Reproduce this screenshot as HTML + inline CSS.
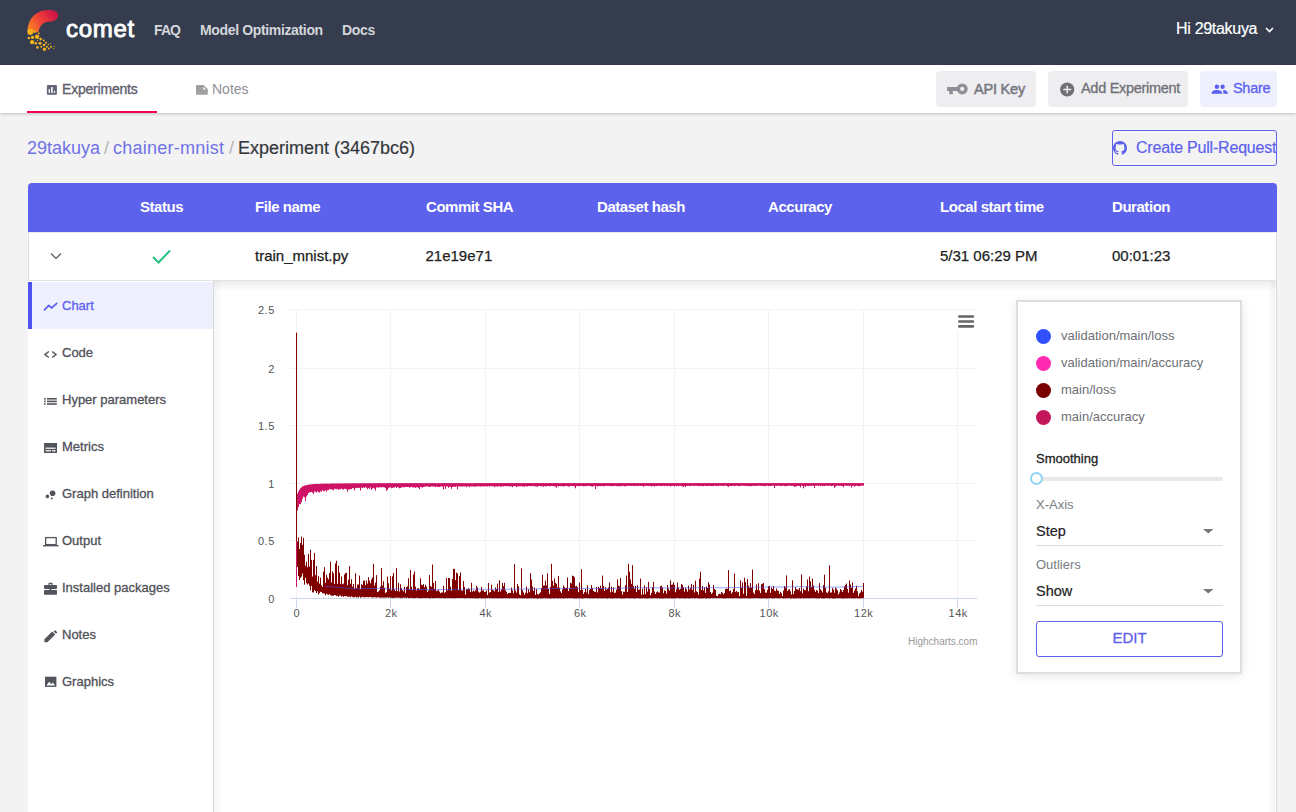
<!DOCTYPE html>
<html><head><meta charset="utf-8">
<style>
*{box-sizing:border-box;margin:0;padding:0}
html,body{width:1296px;height:812px;overflow:hidden;background:#f3f3f3;font-family:"Liberation Sans",sans-serif;}
.abs{position:absolute;white-space:nowrap}
#hdr{position:absolute;left:0;top:0;width:1296px;height:65px;background:#343c4e}
#tabs{position:absolute;left:0;top:65px;width:1296px;height:48px;background:#fff;box-shadow:0 1px 3px rgba(0,0,0,.22)}
.nav{position:absolute;top:22px;font-size:14px;line-height:16px;font-weight:bold;color:#d5d6db;white-space:nowrap;letter-spacing:-0.35px}
.btn{position:absolute;top:6px;height:36px;border-radius:4px;background:#eeeef1;color:#6f7076;font-size:14.5px;white-space:nowrap}
.btn span{position:absolute;top:9px;line-height:17px}
.crumb{position:absolute;top:138px;font-size:18px;line-height:21px;white-space:nowrap}
#tbl{position:absolute;left:28px;top:183px;width:1249px;height:98px;border-radius:4px 4px 0 0;overflow:hidden;}
#thead{position:absolute;left:0;top:0;width:1249px;height:49px;background:#5c62ec}
#trow{position:absolute;left:0;top:49px;width:1249px;height:49px;background:#fff;border:1px solid #e0e0e0;border-top:1px solid #ebebe8;border-bottom:1px solid #e3e3e3}
.th{position:absolute;top:14.5px;font-size:15px;line-height:17px;font-weight:bold;color:#fff;white-space:nowrap;letter-spacing:-0.45px}
.td{position:absolute;top:14px;font-size:15px;line-height:17px;color:#222;white-space:nowrap;-webkit-text-stroke:0.25px #222}
#side{position:absolute;left:28px;top:281px;width:186px;height:531px;background:#fff;border-right:1px solid #dadada;z-index:1}
.si{position:absolute;z-index:2;left:28px;width:185px;height:47px;font-size:13px;color:#4f5158;-webkit-text-stroke:0.3px #4f5158}
.si span{position:absolute;left:34px;top:16px;line-height:15px;white-space:nowrap}
#main{position:absolute;left:214px;top:281px;width:1062px;height:531px;background:#fff}
#rline{position:absolute;left:1276px;top:281px;width:1px;height:531px;background:#dadada}
.ylab{position:absolute;font-size:11px;line-height:12px;color:#555;text-align:right;width:40px;letter-spacing:0.5px}
.xlab{position:absolute;font-size:11px;line-height:12px;color:#555;text-align:center;width:40px;letter-spacing:0.5px}
#legend{position:absolute;left:1016px;top:300px;width:226px;height:374px;background:#fff;border:2px solid #dedede;box-shadow:0 2px 10px rgba(0,0,0,.1)}
.lg{position:absolute;left:18px;font-size:13px;line-height:15px;color:#6d6f75;white-space:nowrap}
.lg i{position:absolute;left:0;top:0;width:15px;height:15px;border-radius:50%}
.lg span{position:absolute;left:25px;top:-1px}
</style></head><body>
<div id="hdr">
  <svg class="abs" style="left:0;top:0" width="64" height="64" viewBox="0 0 64 64">
    <defs><linearGradient id="cg" x1="28" y1="32" x2="58" y2="12" gradientUnits="userSpaceOnUse">
      <stop offset="0" stop-color="#f7901e"/><stop offset="0.5" stop-color="#ef3b3a"/><stop offset="1" stop-color="#c30d4a"/></linearGradient></defs>
    <path d="M27.6 31.5 C27.6 19 36 10.2 47.5 9.9 C54 9.7 58.2 11.5 58.2 15 C58.2 18.8 54.5 21.6 50 21.6 C44 21.6 39.2 25.5 38.4 32.5 Z" fill="url(#cg)"/>
    <g fill="#f5b21e">
      <circle cx="30.3" cy="32" r="3"/><circle cx="34.7" cy="31.7" r="1.2"/><circle cx="38.9" cy="33.3" r="0.9"/>
      <circle cx="28.8" cy="38" r="1.2"/><circle cx="32.5" cy="37.4" r="1.7"/><circle cx="37.1" cy="36.8" r="2.2"/>
      <circle cx="40.6" cy="39.1" r="1.4"/><circle cx="32.1" cy="42.1" r="2.2"/><circle cx="35.9" cy="43.3" r="1.3"/>
      <circle cx="40" cy="43.3" r="1.5"/><circle cx="37.4" cy="40.6" r="0.6"/><circle cx="43.8" cy="40.6" r="1"/>
      <circle cx="46" cy="42.8" r="1"/><circle cx="44" cy="45" r="1.3"/><circle cx="48.3" cy="44.5" r="0.7"/>
      <circle cx="50.5" cy="43.4" r="0.5"/><circle cx="37.4" cy="47.4" r="1.3"/><circle cx="41.2" cy="46.8" r="1"/>
      <circle cx="46.9" cy="46.7" r="1"/><circle cx="51" cy="46.8" r="1"/><circle cx="44.5" cy="49.2" r="1.7"/>
      <circle cx="48.9" cy="48.5" r="0.9"/><circle cx="53.7" cy="48.3" r="0.6"/><circle cx="54.4" cy="46.4" r="0.5"/>
    </g>
  </svg>
  <div class="abs" style="left:66px;top:14.5px;font-size:24px;line-height:28px;color:#fff;letter-spacing:0.7px;-webkit-text-stroke:0.9px #fff">comet</div>
  <div class="nav" style="left:154px;letter-spacing:-0.9px">FAQ</div>
  <div class="nav" style="left:200px">Model Optimization</div>
  <div class="nav" style="left:342px">Docs</div>
  <div class="abs" style="left:1176px;top:19px;font-size:16px;line-height:19px;color:#fff;letter-spacing:-0.3px;-webkit-text-stroke:0.2px #fff">Hi 29takuya</div>
  <svg class="abs" style="left:1265px;top:27px" width="9" height="6" viewBox="0 0 9 6"><path d="M1 1 L4.5 4.5 L8 1" fill="none" stroke="#fff" stroke-width="1.6"/></svg>
</div>
<div id="tabs">
  <svg class="abs" style="left:0;top:0" width="60" height="48" viewBox="0 0 60 48"><rect x="46.9" y="20" width="10" height="9.8" rx="0.8" fill="#646578"/><rect x="48.6" y="24.2" width="1.4" height="3.6" fill="#fff"/><rect x="51.1" y="22.1" width="1.6" height="5.7" fill="#fff"/><rect x="53.8" y="26" width="1.3" height="1.8" fill="#fff"/></svg>
  <div class="abs" style="left:62px;top:16px;font-size:14px;line-height:16px;color:#5f6170;letter-spacing:-0.2px;-webkit-text-stroke:0.35px #5f6170">Experiments</div>
  <div class="abs" style="left:27px;top:46px;width:130px;height:2px;background:#f5004f"></div>
  <svg class="abs" style="left:0;top:0" width="220" height="48" viewBox="0 0 220 48"><path d="M196 21 Q196 20 197 20 H203.6 L207.8 24.3 V28.8 Q207.8 29.8 206.8 29.8 H197 Q196 29.8 196 28.8 Z" fill="#a0a0a0"/><path d="M203.2 21.8 L206 24.6 H203.2 Z" fill="#fff"/></svg>
  <div class="abs" style="left:212px;top:16px;font-size:14px;line-height:16px;color:#8f9096">Notes</div>

  <div class="btn" style="left:936px;width:100px">
    <svg class="abs" style="left:0;top:0" width="40" height="36" viewBox="0 0 40 36"><path d="M11.1 16 H22 V20 H16.8 V23.3 H13.3 V20 H11.1 Z" fill="#8e8e96"/><circle cx="26.2" cy="17.9" r="5.5" fill="#8e8e96"/><circle cx="26.2" cy="17.9" r="2.1" fill="#eeeef1"/></svg>
    <span style="left:38px;top:10px;color:#76777d;-webkit-text-stroke:0.5px #76777d;letter-spacing:-0.2px">API Key</span>
  </div>
  <div class="btn" style="left:1048px;width:140px">
    <svg class="abs" style="left:0;top:0" width="30" height="36" viewBox="0 0 30 36"><circle cx="19.2" cy="18.5" r="7.1" fill="#707075"/><path d="M15.3 18.5 H23.2 M19.2 14.7 V22.2" stroke="#eeeef1" stroke-width="1.5"/></svg>
    <span style="left:33px;top:9px;letter-spacing:-0.3px;-webkit-text-stroke:0.3px #6f7076">Add Experiment</span>
  </div>
  <div class="btn" style="left:1200px;width:77px;background:#eef0fd;color:#5d61ec">
    <svg class="abs" style="left:0;top:0" width="30" height="36" viewBox="0 0 30 36"><circle cx="16.9" cy="15.7" r="2.2" fill="#5b5ff0"/><circle cx="22.6" cy="15.7" r="2.2" fill="#5b5ff0"/><path d="M11.6 22.8 C11.6 20 14 19 16.9 19 C19.8 19 22.2 20 22.2 22.8 Z M23.3 19.1 C25.6 19.3 27.9 20.2 27.9 22.8 H23.3 Z" fill="#5b5ff0"/></svg>
    <span style="left:33px;top:9px;letter-spacing:-0.3px;-webkit-text-stroke:0.3px #5d61ec">Share</span>
  </div>
</div>

<div class="crumb" style="left:27px;color:#6f72e6">29takuya</div>
<div class="crumb" style="left:104px;color:#b5b5b5">/</div>
<div class="crumb" style="left:113px;color:#6f72e6;letter-spacing:0.25px">chainer-mnist</div>
<div class="crumb" style="left:229px;color:#b5b5b5">/</div>
<div class="crumb" style="left:238px;color:#35373c;-webkit-text-stroke:0.2px #35373c">Experiment (3467bc6)</div>

<div class="abs" style="left:1112px;top:130px;width:165px;height:36px;border:1px solid #5d61ec;border-radius:3px;background:#f3f3f3">
  <svg class="abs" style="left:0px;top:10px" width="14" height="14" viewBox="0 0 16 16"><path fill="#5d61ec" d="M8 0C3.58 0 0 3.58 0 8c0 3.54 2.29 6.53 5.47 7.59.4.07.55-.17.55-.38 0-.19-.01-.82-.01-1.49-2.01.37-2.53-.49-2.69-.94-.09-.23-.48-.94-.82-1.13-.28-.15-.68-.52-.01-.53.63-.01 1.08.58 1.23.82.72 1.21 1.87.87 2.33.66.07-.52.28-.87.51-1.07-1.78-.2-3.64-.89-3.64-3.95 0-.87.31-1.59.82-2.15-.08-.2-.36-1.02.08-2.12 0 0 .67-.21 2.2.82.64-.18 1.32-.27 2-.27.68 0 1.36.09 2 .27 1.53-1.04 2.2-.82 2.2-.82.44 1.1.16 1.92.08 2.12.51.56.82 1.28.82 2.15 0 3.07-1.87 3.75-3.65 3.95.29.25.54.73.54 1.48 0 1.07-.01 1.93-.01 2.2 0 .21.15.46.55.38A8.013 8.013 0 0016 8c0-4.42-3.58-8-8-8z"/></svg>
  <div class="abs" style="left:23px;top:7px;font-size:16px;line-height:19px;color:#5d61ec;letter-spacing:-0.2px;-webkit-text-stroke:0.2px #5d61ec">Create Pull-Request</div>
</div>

<div id="tbl">
  <div id="thead">
    <div class="th" style="left:112px">Status</div>
    <div class="th" style="left:227px">File name</div>
    <div class="th" style="left:398px">Commit SHA</div>
    <div class="th" style="left:569px">Dataset hash</div>
    <div class="th" style="left:740px">Accuracy</div>
    <div class="th" style="left:912px">Local start time</div>
    <div class="th" style="left:1084px">Duration</div>
  </div>
  <div id="trow">
    <svg class="abs" style="left:21px;top:18.5px" width="12" height="8" viewBox="0 0 12 8"><path d="M1 1.5 L6 6.5 L11 1.5" fill="none" stroke="#6a6a6a" stroke-width="1.5"/></svg>
    <svg class="abs" style="left:123px;top:16px" width="19" height="15" viewBox="0 0 19 15"><path d="M1 8 L6.5 13.5 L18 1.5" fill="none" stroke="#26c281" stroke-width="2"/></svg>
    <div class="td" style="left:226px">train_mnist.py</div>
    <div class="td" style="left:396.5px">21e19e71</div>
    <div class="td" style="left:911px">5/31 06:29 PM</div>
    <div class="td" style="left:1083px">00:01:23</div>
  </div>
</div>

<div id="side">
  <div class="abs" style="left:0;top:1px;width:185px;height:47px;background:#eef0fd"></div>
  <div class="abs" style="left:0;top:1px;width:4px;height:47px;background:#4e52f0"></div>
</div>
<svg class="abs" style="left:0;top:0;z-index:2" width="220" height="812" viewBox="0 0 220 812">
  <g fill="none" stroke="#5d61ec" stroke-width="1.7" stroke-linejoin="round" stroke-linecap="round"><path d="M44.5 309.8 L48.8 305.3 L51.5 308 L56.8 303.3"/></g>
  <g fill="none" stroke="#53555c" stroke-width="1.5"><path d="M48.8 351.5 L45 354.5 L48.8 357.5 M52.2 351.5 L56 354.5 L52.2 357.5"/></g>
  <g fill="#53555c"><rect x="44" y="398" width="1.6" height="1.6"/><rect x="44" y="400.6" width="1.6" height="1.6"/><rect x="44" y="403.2" width="1.6" height="1.6"/>
     <rect x="47" y="398" width="9.8" height="1.6"/><rect x="47" y="400.6" width="9.8" height="1.6"/><rect x="47" y="403.2" width="9.8" height="1.6"/></g>
  <g><rect x="44" y="443" width="13" height="10" fill="#53555c"/><rect x="45.5" y="447.6" width="10" height="1.2" fill="#fff"/><rect x="45.5" y="450.2" width="5.5" height="1.2" fill="#fff"/><rect x="52" y="450.2" width="3.5" height="1.2" fill="#fff"/></g>
  <g fill="#53555c"><circle cx="52.6" cy="493.2" r="2.8"/><circle cx="47.4" cy="496.4" r="1.8"/><circle cx="51.8" cy="498.6" r="1"/></g>
  <g><rect x="45.6" y="537.6" width="10.6" height="7" fill="none" stroke="#53555c" stroke-width="1.3"/><rect x="43" y="545" width="15.5" height="1.4" fill="#53555c"/></g>
  <g fill="#53555c"><path d="M48.5 585 V583.4 Q48.5 582.8 49.1 582.8 H52 Q52.6 582.8 52.6 583.4 V585 H51.4 V584 H49.7 V585 Z"/><rect x="44" y="585" width="13" height="4" rx="0.8"/><rect x="44" y="590" width="13" height="4.8" rx="0.8"/><rect x="49.5" y="588.2" width="2" height="2.6"/></g>
  <g fill="#53555c"><path d="M44.4 639.3 V642.3 H47.4 L55.2 634.5 L52.2 631.5 Z M56 633.7 L57 632.7 Q57.4 632.3 57 631.9 L55.5 630.4 Q55.1 630 54.7 630.4 L53.7 631.4 Z"/></g>
  <g><rect x="45" y="676.7" width="11.4" height="10.2" fill="#53555c"/><path d="M46.3 685.6 L49.2 681.8 L51.2 684.2 L52.6 682.4 L55.2 685.6 Z" fill="#fff"/></g>
</svg>
<div class="si" style="top:282px;color:#5d61ec;-webkit-text-stroke:0.3px #5d61ec"><span>Chart</span></div>
<div class="si" style="top:329px"><span>Code</span></div>
<div class="si" style="top:376px"><span>Hyper parameters</span></div>
<div class="si" style="top:423px"><span>Metrics</span></div>
<div class="si" style="top:470px"><span>Graph definition</span></div>
<div class="si" style="top:517px"><span>Output</span></div>
<div class="si" style="top:564px"><span>Installed packages</span></div>
<div class="si" style="top:611px"><span>Notes</span></div>
<div class="si" style="top:658px"><span>Graphics</span></div>
<div id="main"></div>
<div class="abs" style="left:214px;top:281px;width:1062px;height:10px;background:linear-gradient(to bottom,rgba(0,0,0,.07),rgba(0,0,0,0))"></div>
<div class="abs" style="left:214px;top:281px;width:8px;height:531px;background:linear-gradient(to right,rgba(0,0,0,.04),rgba(0,0,0,0))"></div>
<div class="abs" style="left:1268px;top:281px;width:7px;height:531px;background:linear-gradient(to right,rgba(0,0,0,0),rgba(0,0,0,.05))"></div>
<div id="rline"></div>

<svg class="abs" style="left:0;top:0" width="1296" height="812" viewBox="0 0 1296 812">
  <g stroke="#f2f2f2" stroke-width="1">
    <path d="M290 540.5 H977"/>
<path d="M290 483.5 H977"/>
<path d="M290 425.5 H977"/>
<path d="M290 368.5 H977"/>
<path d="M290 309.5 H977"/>
<path d="M390.5 309 V598"/>
<path d="M485.5 309 V598"/>
<path d="M579.5 309 V598"/>
<path d="M674.5 309 V598"/>
<path d="M768.5 309 V598"/>
<path d="M863.5 309 V598"/>
<path d="M957.5 309 V598"/>
<path d="M296.5 309 V598"/>
  </g>
  <path d="M290 598.5 H977" stroke="#ccd6eb" stroke-width="1"/>
  <g stroke="#ccd6eb" stroke-width="1"><path d="M296.5 598 V608"/><path d="M390.5 598 V608"/><path d="M485.5 598 V608"/><path d="M579.5 598 V608"/><path d="M674.5 598 V608"/><path d="M768.5 598 V608"/><path d="M863.5 598 V608"/><path d="M957.5 598 V608"/></g>
  <path d="M296.5 482.9V586.9M297.5 493.7V510.5M298.5 491.3V507.0M299.5 489.6V504.1M300.5 488.4V504.3M301.5 487.3V502.2M302.5 486.4V498.9M303.5 486.0V496.6M304.5 485.6V497.3M305.5 485.3V501.2M306.5 485.2V496.5M307.5 484.8V495.1M308.5 484.8V492.9M309.5 484.5V492.6M310.5 484.4V492.0M311.5 484.4V492.1M312.5 484.1V492.7M313.5 484.1V493.8M314.5 484.1V491.7M315.5 483.9V491.7M316.5 483.9V492.5M317.5 483.9V491.2M318.5 483.9V492.2M319.5 484.0V492.5M320.5 483.7V491.3M321.5 483.6V491.7M322.5 483.8V490.1M323.5 483.8V491.2M324.5 483.5V491.1M325.5 483.6V490.2M326.5 483.7V491.7M327.5 483.6V490.2M328.5 483.7V490.1M329.5 483.6V489.2M330.5 483.6V489.4M331.5 483.4V489.3M332.5 483.5V489.7M333.5 483.5V490.5M334.5 483.4V488.7M335.5 483.5V489.1M336.5 483.5V489.3M337.5 483.4V488.9M338.5 483.4V489.8M339.5 483.4V489.4M340.5 483.5V489.2M341.5 483.3V488.6M342.5 483.4V489.3M343.5 483.4V489.6M344.5 483.3V488.8M345.5 483.4V488.8M346.5 483.4V489.3M347.5 483.3V491.7M348.5 483.3V489.6M349.5 483.3V489.5M350.5 483.3V489.1M351.5 483.3V489.2M352.5 483.3V488.2M353.5 483.2V488.2M354.5 483.3V490.4M355.5 483.3V488.2M356.5 483.3V487.8M357.5 483.2V488.0M358.5 483.3V487.9M359.5 483.3V487.8M360.5 483.3V490.6M361.5 483.3V487.6M362.5 483.2V488.1M363.5 483.2V487.4M364.5 483.2V487.8M365.5 483.3V487.3M366.5 483.2V487.6M367.5 483.2V489.1M368.5 483.2V488.0M369.5 483.2V488.9M370.5 483.2V487.4M371.5 483.3V489.9M372.5 483.2V488.5M373.5 483.2V487.9M374.5 483.2V488.5M375.5 483.2V490.6M376.5 483.2V487.4M377.5 483.2V487.5M378.5 483.2V487.6M379.5 483.1V487.4M380.5 483.2V487.1M381.5 483.2V487.6M382.5 483.2V486.9M383.5 483.2V487.3M384.5 483.2V487.4M385.5 483.2V487.9M386.5 483.2V490.9M387.5 483.2V489.8M388.5 483.2V487.8M389.5 483.1V487.6M390.5 483.2V487.1M391.5 483.2V488.3M392.5 483.2V487.9M393.5 483.1V487.5M394.5 483.2V487.6M395.5 483.2V486.8M396.5 483.2V488.0M397.5 483.2V487.0M398.5 483.2V487.5M399.5 483.1V488.3M400.5 483.2V487.9M401.5 483.2V487.5M402.5 483.2V486.9M403.5 483.2V487.6M404.5 483.2V487.1M405.5 483.1V486.9M406.5 483.2V487.1M407.5 483.1V487.0M408.5 483.2V486.9M409.5 483.2V487.7M410.5 483.1V487.2M411.5 483.1V486.8M412.5 483.2V487.4M413.5 483.2V487.5M414.5 483.1V487.2M415.5 483.2V487.9M416.5 483.1V487.2M417.5 483.2V487.5M418.5 483.2V487.7M419.5 483.2V489.1M420.5 483.2V486.9M421.5 483.2V487.2M422.5 483.1V487.6M423.5 483.2V487.0M424.5 483.2V486.7M425.5 483.1V486.5M426.5 483.2V486.5M427.5 483.1V486.5M428.5 483.2V486.6M429.5 483.2V487.0M430.5 483.2V486.8M431.5 483.1V486.4M432.5 483.1V486.5M433.5 483.1V486.7M434.5 483.1V486.5M435.5 483.2V487.2M436.5 483.2V486.5M437.5 483.2V486.9M438.5 483.1V487.1M439.5 483.2V486.9M440.5 483.2V486.6M441.5 483.1V486.3M442.5 483.1V486.8M443.5 483.1V489.5M444.5 483.1V486.3M445.5 483.1V488.9M446.5 483.1V486.3M447.5 483.2V486.5M448.5 483.2V487.7M449.5 483.1V486.8M450.5 483.2V486.8M451.5 483.1V488.8M452.5 483.2V487.0M453.5 483.1V486.6M454.5 483.1V486.7M455.5 483.1V487.0M456.5 483.1V486.3M457.5 483.1V489.2M458.5 483.2V486.4M459.5 483.1V486.4M460.5 483.1V486.6M461.5 483.1V486.5M462.5 483.1V486.5M463.5 483.1V486.4M464.5 483.2V486.5M465.5 483.1V486.3M466.5 483.2V487.2M467.5 483.2V486.5M468.5 483.2V486.3M469.5 483.1V487.3M470.5 483.1V486.2M471.5 483.2V486.6M472.5 483.2V486.3M473.5 483.2V486.7M474.5 483.1V486.4M475.5 483.2V486.8M476.5 483.1V486.5M477.5 483.1V486.3M478.5 483.1V486.2M479.5 483.1V486.4M480.5 483.2V486.7M481.5 483.1V486.3M482.5 483.1V486.3M483.5 483.1V486.6M484.5 483.1V486.2M485.5 483.1V486.3M486.5 483.1V486.3M487.5 483.1V486.5M488.5 483.1V486.2M489.5 483.1V486.6M490.5 483.1V486.2M491.5 483.1V486.2M492.5 483.1V486.2M493.5 483.1V486.3M494.5 483.1V487.2M495.5 483.1V486.4M496.5 483.1V486.2M497.5 483.1V486.9M498.5 483.1V486.1M499.5 483.1V486.2M500.5 483.1V486.7M501.5 483.1V486.5M502.5 483.1V486.4M503.5 483.1V486.4M504.5 483.1V486.1M505.5 483.1V486.2M506.5 483.1V486.1M507.5 483.1V486.4M508.5 483.1V486.1M509.5 483.1V486.4M510.5 483.1V486.6M511.5 483.1V486.2M512.5 483.1V487.2M513.5 483.1V486.1M514.5 483.1V486.3M515.5 483.1V486.1M516.5 483.1V487.0M517.5 483.1V486.4M518.5 483.1V486.2M519.5 483.1V486.4M520.5 483.1V486.2M521.5 483.1V486.2M522.5 483.1V486.6M523.5 483.1V486.4M524.5 483.1V486.8M525.5 483.1V486.1M526.5 483.1V486.4M527.5 483.1V486.5M528.5 483.1V486.0M529.5 483.1V486.2M530.5 483.1V486.1M531.5 483.1V486.2M532.5 483.1V486.1M533.5 483.1V486.0M534.5 483.1V486.3M535.5 483.1V486.4M536.5 483.1V486.5M537.5 483.1V486.8M538.5 483.1V486.0M539.5 483.1V486.0M540.5 483.1V486.2M541.5 483.1V486.4M542.5 483.1V486.2M543.5 483.1V486.7M544.5 483.1V486.0M545.5 483.1V486.6M546.5 483.1V486.3M547.5 483.1V486.0M548.5 483.1V486.0M549.5 483.1V486.5M550.5 483.1V486.0M551.5 483.1V486.0M552.5 483.1V486.0M553.5 483.1V486.2M554.5 483.1V486.4M555.5 483.1V486.5M556.5 483.1V487.8M557.5 483.1V486.0M558.5 483.1V486.6M559.5 483.1V486.0M560.5 483.1V486.2M561.5 483.1V486.0M562.5 483.1V486.4M563.5 483.1V486.7M564.5 483.1V486.0M565.5 483.1V486.1M566.5 483.1V485.9M567.5 483.1V486.2M568.5 483.1V486.5M569.5 483.1V486.5M570.5 483.1V486.0M571.5 483.1V486.0M572.5 483.1V486.0M573.5 483.1V486.1M574.5 483.1V486.5M575.5 483.1V488.3M576.5 483.1V486.1M577.5 483.1V486.0M578.5 483.1V486.2M579.5 483.1V486.1M580.5 483.1V486.0M581.5 483.1V485.9M582.5 483.1V486.1M583.5 483.1V486.4M584.5 483.1V486.1M585.5 483.1V486.1M586.5 483.1V486.1M587.5 483.1V486.0M588.5 483.1V485.8M589.5 483.1V486.0M590.5 483.1V486.3M591.5 483.1V486.3M592.5 483.1V486.7M593.5 483.1V486.2M594.5 483.1V485.8M595.5 483.1V489.0M596.5 483.1V486.0M597.5 483.1V486.4M598.5 483.1V486.2M599.5 483.1V486.1M600.5 483.1V486.2M601.5 483.1V485.9M602.5 483.1V486.1M603.5 483.1V486.4M604.5 483.1V486.1M605.5 483.1V485.9M606.5 483.1V485.8M607.5 483.1V486.0M608.5 483.1V485.9M609.5 483.1V486.0M610.5 483.1V486.2M611.5 483.1V486.2M612.5 483.1V486.1M613.5 483.1V485.9M614.5 483.1V486.1M615.5 483.1V485.8M616.5 483.1V486.2M617.5 483.1V486.2M618.5 483.1V486.1M619.5 483.1V486.3M620.5 483.1V486.3M621.5 483.1V486.2M622.5 483.1V485.8M623.5 483.1V486.0M624.5 483.1V486.3M625.5 483.1V486.2M626.5 483.1V486.1M627.5 483.1V485.8M628.5 483.1V485.9M629.5 483.1V485.9M630.5 483.1V485.9M631.5 483.1V486.0M632.5 483.1V485.8M633.5 483.1V486.1M634.5 483.1V486.0M635.5 483.1V486.1M636.5 483.1V485.8M637.5 483.1V486.1M638.5 483.1V485.9M639.5 483.1V485.8M640.5 483.1V485.9M641.5 483.1V486.0M642.5 483.1V485.9M643.5 483.1V486.8M644.5 483.1V485.9M645.5 483.1V485.8M646.5 483.1V485.9M647.5 483.1V485.9M648.5 483.1V486.1M649.5 483.1V485.8M650.5 483.1V486.0M651.5 483.1V486.5M652.5 483.1V486.3M653.5 483.1V485.9M654.5 483.1V486.6M655.5 483.1V485.9M656.5 483.1V486.0M657.5 483.1V486.1M658.5 483.1V485.8M659.5 483.1V486.0M660.5 483.1V485.9M661.5 483.1V486.0M662.5 483.1V486.2M663.5 483.1V485.7M664.5 483.1V486.1M665.5 483.1V485.9M666.5 483.1V485.9M667.5 483.1V486.2M668.5 483.1V485.9M669.5 483.1V485.8M670.5 483.1V486.6M671.5 483.1V486.0M672.5 483.1V486.0M673.5 483.1V485.8M674.5 483.1V486.6M675.5 483.1V485.8M676.5 483.1V486.2M677.5 483.1V485.8M678.5 483.1V486.2M679.5 483.1V485.8M680.5 483.1V485.8M681.5 483.1V486.0M682.5 483.1V486.5M683.5 483.1V486.9M684.5 483.1V486.1M685.5 483.1V487.1M686.5 483.1V485.9M687.5 483.1V486.0M688.5 483.1V485.8M689.5 483.1V485.9M690.5 483.1V486.1M691.5 483.1V485.9M692.5 483.1V485.8M693.5 483.1V485.7M694.5 483.1V486.2M695.5 483.1V485.7M696.5 483.1V485.9M697.5 483.1V485.8M698.5 483.1V486.1M699.5 483.1V486.0M700.5 483.1V486.0M701.5 483.1V485.8M702.5 483.1V486.1M703.5 483.1V486.2M704.5 483.1V485.7M705.5 483.1V486.0M706.5 483.1V486.1M707.5 483.1V486.0M708.5 483.1V486.0M709.5 483.1V485.9M710.5 483.1V486.1M711.5 483.1V486.0M712.5 483.1V486.1M713.5 483.1V486.1M714.5 483.1V485.7M715.5 483.1V485.8M716.5 483.1V486.2M717.5 483.1V485.8M718.5 483.1V486.2M719.5 483.1V485.7M720.5 483.1V485.8M721.5 483.1V485.9M722.5 483.1V485.7M723.5 483.1V486.2M724.5 483.1V485.7M725.5 483.1V485.7M726.5 483.1V485.8M727.5 483.1V486.4M728.5 483.1V486.9M729.5 483.1V485.9M730.5 483.1V486.0M731.5 483.1V486.1M732.5 483.1V485.9M733.5 483.1V485.8M734.5 483.1V486.1M735.5 483.1V485.9M736.5 483.1V485.7M737.5 483.1V485.8M738.5 483.1V486.2M739.5 483.1V486.0M740.5 483.1V486.1M741.5 483.1V485.6M742.5 483.1V485.7M743.5 483.1V485.9M744.5 483.1V485.8M745.5 483.1V486.2M746.5 483.1V485.8M747.5 483.1V486.0M748.5 483.1V486.1M749.5 483.1V486.0M750.5 483.1V486.2M751.5 483.1V486.2M752.5 483.1V485.7M753.5 483.1V486.2M754.5 483.1V485.7M755.5 483.1V486.0M756.5 483.1V485.8M757.5 483.1V485.9M758.5 483.1V485.7M759.5 483.1V485.7M760.5 483.1V485.8M761.5 483.1V486.0M762.5 483.1V485.9M763.5 483.1V486.0M764.5 483.1V486.0M765.5 483.1V486.3M766.5 483.1V485.6M767.5 483.1V485.8M768.5 483.1V486.0M769.5 483.1V485.9M770.5 483.1V485.9M771.5 483.1V486.0M772.5 483.1V485.7M773.5 483.1V485.7M774.5 483.1V488.0M775.5 483.1V485.8M776.5 483.1V485.9M777.5 483.1V485.8M778.5 483.1V485.6M779.5 483.1V486.2M780.5 483.1V485.8M781.5 483.1V486.2M782.5 483.1V485.7M783.5 483.1V485.8M784.5 483.1V486.2M785.5 483.1V485.9M786.5 483.1V486.2M787.5 483.1V485.8M788.5 483.1V485.8M789.5 483.1V485.6M790.5 483.1V485.8M791.5 483.1V485.9M792.5 483.1V485.8M793.5 483.1V486.1M794.5 483.1V487.0M795.5 483.1V486.3M796.5 483.1V486.4M797.5 483.1V485.9M798.5 483.1V485.8M799.5 483.1V486.1M800.5 483.1V487.4M801.5 483.1V485.6M802.5 483.1V486.0M803.5 483.1V488.4M804.5 483.1V486.1M805.5 483.1V486.8M806.5 483.1V485.8M807.5 483.1V486.1M808.5 483.1V486.1M809.5 483.1V485.9M810.5 483.1V485.7M811.5 483.1V486.1M812.5 483.1V485.7M813.5 483.1V485.7M814.5 483.1V488.0M815.5 483.1V485.7M816.5 483.1V485.7M817.5 483.1V485.7M818.5 483.1V485.7M819.5 483.1V485.6M820.5 483.1V486.3M821.5 483.1V485.6M822.5 483.1V486.1M823.5 483.1V485.9M824.5 483.1V486.1M825.5 483.1V485.8M826.5 483.1V485.7M827.5 483.1V485.7M828.5 483.1V486.0M829.5 483.1V485.8M830.5 483.1V485.6M831.5 483.1V486.3M832.5 483.1V485.8M833.5 483.1V485.7M834.5 483.1V487.8M835.5 483.1V486.7M836.5 483.1V485.8M837.5 483.1V485.6M838.5 483.1V485.9M839.5 483.1V485.8M840.5 483.1V485.8M841.5 483.1V486.1M842.5 483.1V486.0M843.5 483.1V487.2M844.5 483.1V485.6M845.5 483.1V485.6M846.5 483.1V485.9M847.5 483.1V485.7M848.5 483.1V485.6M849.5 483.1V486.2M850.5 483.1V485.7M851.5 483.1V487.6M852.5 483.1V485.8M853.5 483.1V485.7M854.5 483.1V486.8M855.5 483.1V486.0M856.5 483.1V485.6M857.5 483.1V486.1M858.5 483.1V486.0M859.5 483.1V486.2M860.5 483.1V485.8M861.5 483.1V485.8M862.5 483.1V485.6M863.5 483.1V485.6" stroke="#cc1166" stroke-width="1" fill="none"/>
  <path d="M296.5 332.6V540.7M297.5 541.5V566.9M298.5 537.5V576.1M299.5 549.1V580.0M300.5 542.9V577.9M301.5 536.5V576.7M302.5 544.9V573.5M303.5 537.9V580.2M304.5 554.8V584.7M305.5 565.7V577.9M306.5 561.8V583.2M307.5 567.2V584.6M308.5 554.0V583.6M309.5 566.6V585.9M310.5 549.8V590.3M311.5 559.9V585.9M312.5 576.5V592.3M313.5 559.9V592.5M314.5 552.9V590.1M315.5 575.2V591.1M316.5 566.1V593.1M317.5 581.7V591.3M318.5 575.9V594.5M319.5 583.5V593.1M320.5 577.7V591.8M321.5 585.2V592.0M322.5 586.8V593.3M323.5 571.6V593.3M324.5 567.2V593.7M325.5 582.8V595.3M326.5 574.8V593.7M327.5 577.7V594.5M328.5 579.3V594.9M329.5 572.9V594.1M330.5 561.7V595.2M331.5 582.5V595.7M332.5 571.4V595.7M333.5 573.4V595.7M334.5 583.9V595.0M335.5 563.4V595.2M336.5 560.8V596.1M337.5 583.8V595.8M338.5 565.8V596.7M339.5 572.6V595.6M340.5 583.8V595.4M341.5 576.5V596.7M342.5 584.3V596.0M343.5 583.6V596.9M344.5 574.5V595.9M345.5 572.9V596.3M346.5 572.9V596.1M347.5 585.2V596.7M348.5 579.6V596.9M349.5 566.2V596.6M350.5 583.7V597.4M351.5 579.2V596.3M352.5 586.6V597.0M353.5 583.9V597.4M354.5 588.6V597.2M355.5 573.4V596.8M356.5 588.1V597.5M357.5 584.5V597.1M358.5 584.5V597.5M359.5 575.6V596.6M360.5 589.2V597.7M361.5 584.2V597.4M362.5 585.0V596.8M363.5 580.7V597.0M364.5 580.5V597.5M365.5 585.1V597.0M366.5 580.6V597.2M367.5 583.6V597.1M368.5 577.2V597.3M369.5 580.6V597.1M370.5 583.4V597.0M371.5 579.5V597.3M372.5 577.6V597.6M373.5 563.8V597.5M374.5 585.7V597.1M375.5 582.6V597.4M376.5 575.1V597.6M377.5 592.1V597.4M378.5 591.5V597.3M379.5 590.1V597.4M380.5 586.5V597.9M381.5 568.0V597.5M382.5 585.6V597.6M383.5 581.2V597.7M384.5 587.7V597.6M385.5 592.9V597.6M386.5 592.2V597.7M387.5 576.5V597.4M388.5 583.2V597.7M389.5 589.0V597.4M390.5 576.2V597.9M391.5 590.3V597.7M392.5 576.3V598.0M393.5 572.9V598.0M394.5 589.4V597.7M395.5 591.0V597.9M396.5 568.1V597.6M397.5 591.2V597.8M398.5 583.0V597.7M399.5 591.5V597.8M400.5 584.2V598.1M401.5 588.2V597.8M402.5 590.2V598.0M403.5 591.3V597.7M404.5 586.8V597.7M405.5 592.9V597.7M406.5 587.1V598.0M407.5 586.4V597.6M408.5 578.2V598.2M409.5 589.2V598.0M410.5 570.0V598.0M411.5 586.8V597.8M412.5 590.1V598.1M413.5 574.5V598.2M414.5 571.5V598.0M415.5 586.7V598.2M416.5 590.5V597.8M417.5 588.2V597.9M418.5 588.1V598.1M419.5 589.7V598.1M420.5 578.3V598.2M421.5 584.7V598.1M422.5 585.2V598.2M423.5 584.1V597.9M424.5 587.3V598.0M425.5 584.7V598.2M426.5 586.6V598.0M427.5 591.9V597.9M428.5 590.4V598.2M429.5 575.1V598.3M430.5 586.1V598.4M431.5 586.8V597.8M432.5 564.5V598.2M433.5 582.9V598.3M434.5 588.9V598.0M435.5 581.0V598.1M436.5 590.9V597.9M437.5 590.6V598.1M438.5 589.6V597.9M439.5 591.6V598.1M440.5 593.2V598.1M441.5 592.5V598.1M442.5 592.4V598.1M443.5 585.9V598.0M444.5 592.7V598.3M445.5 592.1V598.3M446.5 577.9V597.9M447.5 590.4V598.2M448.5 577.8V598.1M449.5 578.2V598.2M450.5 586.8V598.1M451.5 590.8V598.0M452.5 579.0V598.3M453.5 568.8V598.0M454.5 568.9V598.3M455.5 580.1V598.2M456.5 572.6V598.1M457.5 573.5V598.0M458.5 590.1V598.2M459.5 576.0V598.0M460.5 572.5V598.0M461.5 590.4V598.1M462.5 590.7V598.0M463.5 581.0V598.0M464.5 586.9V598.3M465.5 594.6V598.2M466.5 589.4V598.0M467.5 589.1V598.1M468.5 588.2V598.0M469.5 589.0V598.1M470.5 592.1V598.3M471.5 582.8V598.1M472.5 591.6V598.3M473.5 590.5V598.1M474.5 591.4V598.3M475.5 590.4V598.3M476.5 585.8V598.2M477.5 587.5V598.4M478.5 591.6V598.4M479.5 592.6V598.0M480.5 591.7V598.0M481.5 586.8V598.4M482.5 590.5V598.3M483.5 590.2V598.2M484.5 592.0V598.4M485.5 591.8V598.4M486.5 590.4V598.0M487.5 595.0V598.3M488.5 583.0V598.0M489.5 592.6V598.2M490.5 592.0V598.2M491.5 584.6V598.2M492.5 589.9V598.2M493.5 590.4V598.3M494.5 591.3V598.2M495.5 587.4V598.2M496.5 589.0V598.1M497.5 583.6V598.3M498.5 592.0V598.4M499.5 580.2V598.1M500.5 591.4V598.2M501.5 589.5V598.4M502.5 583.0V598.1M503.5 586.2V598.3M504.5 582.8V598.1M505.5 590.4V598.2M506.5 591.8V598.3M507.5 594.1V598.2M508.5 593.0V598.2M509.5 592.9V598.5M510.5 593.0V598.0M511.5 587.5V598.3M512.5 590.3V598.3M513.5 593.3V598.1M514.5 564.2V598.2M515.5 590.6V598.4M516.5 592.6V598.2M517.5 583.9V598.5M518.5 586.2V598.1M519.5 594.4V598.2M520.5 595.3V598.2M521.5 568.4V598.2M522.5 590.2V598.3M523.5 592.4V598.2M524.5 594.8V598.3M525.5 592.7V598.1M526.5 586.4V598.5M527.5 593.3V598.4M528.5 589.2V598.4M529.5 592.2V598.2M530.5 573.2V598.2M531.5 579.5V598.4M532.5 586.5V598.0M533.5 591.0V598.3M534.5 587.6V598.5M535.5 594.9V598.2M536.5 589.0V598.4M537.5 594.0V598.5M538.5 594.4V598.4M539.5 593.4V598.3M540.5 592.3V598.4M541.5 588.0V598.3M542.5 574.8V598.4M543.5 585.6V598.3M544.5 585.5V598.1M545.5 580.6V598.3M546.5 585.4V598.2M547.5 573.4V598.4M548.5 589.0V598.4M549.5 594.1V598.3M550.5 586.9V598.5M551.5 563.8V598.3M552.5 580.9V598.2M553.5 585.7V598.3M554.5 578.5V598.4M555.5 582.9V598.3M556.5 583.8V598.1M557.5 587.3V598.4M558.5 576.0V598.3M559.5 587.7V598.2M560.5 591.4V598.4M561.5 593.0V598.1M562.5 589.3V598.4M563.5 585.5V598.5M564.5 587.1V598.3M565.5 588.1V598.2M566.5 587.9V598.2M567.5 577.5V598.3M568.5 591.1V598.1M569.5 588.5V598.1M570.5 582.8V598.3M571.5 583.4V598.1M572.5 575.6V598.1M573.5 576.0V598.4M574.5 577.5V598.4M575.5 586.4V598.4M576.5 585.8V598.5M577.5 587.1V598.1M578.5 592.1V598.3M579.5 582.5V598.4M580.5 590.1V598.2M581.5 569.2V598.4M582.5 589.8V598.5M583.5 593.9V598.3M584.5 592.1V598.1M585.5 588.9V598.2M586.5 592.4V598.0M587.5 585.3V598.3M588.5 594.2V598.1M589.5 589.9V598.3M590.5 589.1V598.3M591.5 585.0V598.2M592.5 588.1V598.3M593.5 591.0V598.4M594.5 591.7V598.2M595.5 592.0V598.1M596.5 587.0V598.3M597.5 592.4V598.3M598.5 586.7V598.4M599.5 587.9V598.2M600.5 585.6V598.3M601.5 588.7V598.4M602.5 575.6V598.1M603.5 585.9V598.5M604.5 590.9V598.1M605.5 586.9V598.1M606.5 589.7V598.5M607.5 589.0V598.5M608.5 587.3V598.2M609.5 582.4V598.2M610.5 592.3V598.4M611.5 586.6V598.3M612.5 591.8V598.5M613.5 587.3V598.3M614.5 592.9V598.3M615.5 592.6V598.1M616.5 589.7V598.3M617.5 579.4V598.4M618.5 585.7V598.1M619.5 586.3V598.2M620.5 578.1V598.4M621.5 591.1V598.5M622.5 594.5V598.3M623.5 591.7V598.4M624.5 591.8V598.3M625.5 585.2V598.4M626.5 575.5V598.1M627.5 592.0V598.1M628.5 563.8V598.2M629.5 571.8V598.5M630.5 579.5V598.1M631.5 583.9V598.3M632.5 565.2V598.1M633.5 586.2V598.5M634.5 588.7V598.4M635.5 585.9V598.4M636.5 592.1V598.1M637.5 585.3V598.1M638.5 589.7V598.2M639.5 589.5V598.4M640.5 578.6V598.5M641.5 594.7V598.1M642.5 588.7V598.4M643.5 594.5V598.1M644.5 585.3V598.3M645.5 594.1V598.3M646.5 587.3V598.3M647.5 591.6V598.5M648.5 581.9V598.4M649.5 588.9V598.1M650.5 595.3V598.3M651.5 592.9V598.2M652.5 587.3V598.3M653.5 581.8V598.3M654.5 591.5V598.1M655.5 594.0V598.2M656.5 592.3V598.3M657.5 591.4V598.3M658.5 592.4V598.0M659.5 592.6V598.5M660.5 586.1V598.3M661.5 585.7V598.4M662.5 587.5V598.5M663.5 593.3V598.5M664.5 590.4V598.1M665.5 590.9V598.3M666.5 593.7V598.2M667.5 585.0V598.4M668.5 588.5V598.3M669.5 590.5V598.3M670.5 580.4V598.1M671.5 584.8V598.5M672.5 584.5V598.4M673.5 582.3V598.4M674.5 584.8V598.3M675.5 592.2V598.3M676.5 589.3V598.2M677.5 582.6V598.0M678.5 587.6V598.1M679.5 589.8V598.4M680.5 588.9V598.3M681.5 583.9V598.3M682.5 584.9V598.1M683.5 587.3V598.3M684.5 591.6V598.4M685.5 587.7V598.5M686.5 589.3V598.3M687.5 591.7V598.2M688.5 585.6V598.4M689.5 589.5V598.3M690.5 588.1V598.3M691.5 584.0V598.1M692.5 589.9V598.2M693.5 584.8V598.0M694.5 592.5V598.3M695.5 580.8V598.3M696.5 591.3V598.0M697.5 592.1V598.3M698.5 594.6V598.2M699.5 578.6V598.5M700.5 571.6V598.4M701.5 590.1V598.4M702.5 586.0V598.4M703.5 590.5V598.3M704.5 587.2V598.1M705.5 592.9V598.4M706.5 586.4V598.5M707.5 588.0V598.2M708.5 582.2V598.3M709.5 584.6V598.5M710.5 592.0V598.1M711.5 593.8V598.1M712.5 592.6V598.2M713.5 584.9V598.1M714.5 589.0V598.1M715.5 590.0V598.0M716.5 595.7V598.4M717.5 596.2V598.1M718.5 594.3V598.2M719.5 593.8V598.1M720.5 594.3V598.1M721.5 592.0V598.2M722.5 592.9V598.2M723.5 594.4V598.4M724.5 593.1V598.3M725.5 589.0V598.4M726.5 588.4V598.3M727.5 588.9V598.1M728.5 570.1V598.3M729.5 591.1V598.1M730.5 590.5V598.4M731.5 593.7V598.2M732.5 592.1V598.4M733.5 588.9V598.2M734.5 573.6V598.1M735.5 591.9V598.1M736.5 590.9V598.1M737.5 592.2V598.4M738.5 592.0V598.2M739.5 596.2V598.4M740.5 580.3V598.3M741.5 587.6V598.4M742.5 582.3V598.3M743.5 593.8V598.2M744.5 577.7V598.4M745.5 582.1V598.2M746.5 595.8V598.1M747.5 579.0V598.3M748.5 585.5V598.3M749.5 587.8V598.4M750.5 583.2V598.3M751.5 587.7V598.3M752.5 569.6V598.2M753.5 592.6V598.2M754.5 594.1V598.2M755.5 590.2V598.1M756.5 584.4V598.1M757.5 589.9V598.2M758.5 583.2V598.4M759.5 590.6V598.2M760.5 593.1V598.3M761.5 584.2V598.5M762.5 583.7V598.2M763.5 583.0V598.4M764.5 589.1V598.2M765.5 592.6V598.3M766.5 592.6V598.5M767.5 589.8V598.3M768.5 586.1V598.2M769.5 585.9V598.4M770.5 592.8V598.1M771.5 587.4V598.1M772.5 589.0V598.5M773.5 586.0V598.2M774.5 590.5V598.3M775.5 591.2V598.1M776.5 588.5V598.1M777.5 590.6V598.3M778.5 590.9V598.2M779.5 593.9V598.3M780.5 591.8V598.2M781.5 593.2V598.0M782.5 596.1V598.3M783.5 590.6V598.5M784.5 586.1V598.1M785.5 587.6V598.5M786.5 575.4V598.2M787.5 590.9V598.2M788.5 589.6V598.3M789.5 589.2V598.1M790.5 591.3V598.4M791.5 594.5V598.4M792.5 580.3V598.1M793.5 594.1V598.5M794.5 591.0V598.4M795.5 587.2V598.4M796.5 589.1V598.3M797.5 589.5V598.2M798.5 589.7V598.1M799.5 588.0V598.4M800.5 591.2V598.5M801.5 574.4V598.2M802.5 593.3V598.1M803.5 588.7V598.5M804.5 590.1V598.2M805.5 590.2V598.2M806.5 586.6V598.2M807.5 579.5V598.2M808.5 591.2V598.4M809.5 576.7V598.1M810.5 581.4V598.4M811.5 587.2V598.1M812.5 578.6V598.1M813.5 585.6V598.1M814.5 589.7V598.3M815.5 591.8V598.1M816.5 590.1V598.4M817.5 590.8V598.3M818.5 593.2V598.3M819.5 583.1V598.4M820.5 589.2V598.0M821.5 590.6V598.4M822.5 592.4V598.3M823.5 585.1V598.5M824.5 574.7V598.4M825.5 587.9V598.1M826.5 592.3V598.2M827.5 593.1V598.3M828.5 591.3V598.2M829.5 565.4V598.4M830.5 592.6V598.2M831.5 592.4V598.1M832.5 587.9V598.5M833.5 589.5V598.4M834.5 592.7V598.4M835.5 587.5V598.5M836.5 588.7V598.1M837.5 590.5V598.2M838.5 594.4V598.2M839.5 592.4V598.2M840.5 589.1V598.2M841.5 590.2V598.4M842.5 591.9V598.4M843.5 590.0V598.5M844.5 586.4V598.4M845.5 584.9V598.4M846.5 583.5V598.1M847.5 588.9V598.4M848.5 592.7V598.3M849.5 580.4V598.2M850.5 584.5V598.1M851.5 587.8V598.5M852.5 582.5V598.2M853.5 592.8V598.3M854.5 590.6V598.4M855.5 588.5V598.3M856.5 585.7V598.1M857.5 591.1V598.4M858.5 596.2V598.2M859.5 593.4V598.3M860.5 592.4V598.5M861.5 589.8V598.1M862.5 591.6V598.1M863.5 583.0V598.1" stroke="#800000" stroke-width="1" fill="none"/>
  <path d="M324.6 586.2 L352.9 588.8 L381.2 588.4 L409.6 589.5 L437.9 589.7 L466.3 589.2 L494.6 589.3 L523.0 589.1 L551.4 588.6 L579.7 588.3 L608.0 588.6 L636.4 587.6 L664.8 587.9 L693.1 587.7 L721.5 587.8 L749.8 587.2 L778.1 587.0 L806.5 586.7 L834.8 587.2 L863.2 586.4" stroke="#3d5afe" stroke-opacity="0.55" stroke-width="1" fill="none"/>
  <rect x="950" y="310" width="30" height="22" fill="#fff"/><g fill="#666"><rect x="958" y="315.2" width="16.2" height="2.6" rx="1.3"/><rect x="958" y="320.2" width="16.2" height="2.6" rx="1.3"/><rect x="958" y="325.1" width="16.2" height="2.6" rx="1.3"/></g>
</svg>
<div class="ylab" style="left:234.8px;top:592.5px">0</div>
<div class="ylab" style="left:234.8px;top:534.5px">0.5</div>
<div class="ylab" style="left:234.8px;top:477.5px">1</div>
<div class="ylab" style="left:234.8px;top:419.5px">1.5</div>
<div class="ylab" style="left:234.8px;top:362.5px">2</div>
<div class="ylab" style="left:234.8px;top:303.5px">2.5</div>
<div class="xlab" style="left:276.7px;top:607px">0</div>
<div class="xlab" style="left:371.2px;top:607px">2k</div>
<div class="xlab" style="left:465.7px;top:607px">4k</div>
<div class="xlab" style="left:560.2px;top:607px">6k</div>
<div class="xlab" style="left:654.7px;top:607px">8k</div>
<div class="xlab" style="left:749.2px;top:607px">10k</div>
<div class="xlab" style="left:843.7px;top:607px">12k</div>
<div class="xlab" style="left:938.2px;top:607px">14k</div>
<div class="abs" style="left:908px;top:636px;font-size:10px;line-height:11px;color:#999">Highcharts.com</div>

<div id="legend">
  <div class="lg" style="top:27px"><i style="background:#304ffe"></i><span>validation/main/loss</span></div>
  <div class="lg" style="top:54px"><i style="background:#ff2ab0"></i><span>validation/main/accuracy</span></div>
  <div class="lg" style="top:81px"><i style="background:#7a0000"></i><span>main/loss</span></div>
  <div class="lg" style="top:108px"><i style="background:#c2185b"></i><span>main/accuracy</span></div>
  <div class="abs" style="left:18px;top:149px;font-size:13px;line-height:15px;color:#222;-webkit-text-stroke:0.3px #222">Smoothing</div>
  <div class="abs" style="left:18px;top:175px;width:187px;height:4px;border-radius:2px;background:#e8e8e8"></div>
  <div class="abs" style="left:11.5px;top:170px;width:13px;height:13px;border-radius:50%;border:2px solid #8fd3f4;background:#fff"></div>
  <div class="abs" style="left:18px;top:195px;font-size:13px;line-height:15px;color:#7a7b80">X-Axis</div>
  <div class="abs" style="left:18px;top:220px;font-size:14.5px;line-height:18px;color:#222;-webkit-text-stroke:0.2px #222">Step</div>
  <svg class="abs" style="left:184.5px;top:226.5px" width="11" height="5" viewBox="0 0 11 5"><path d="M0 0 H10.5 L5.25 4.5Z" fill="#777"/></svg>
  <div class="abs" style="left:18px;top:243px;width:187px;height:1px;background:#dcdcdc"></div>
  <div class="abs" style="left:18px;top:255px;font-size:13px;line-height:15px;color:#7a7b80">Outliers</div>
  <div class="abs" style="left:18px;top:280px;font-size:14.5px;line-height:18px;color:#222;-webkit-text-stroke:0.2px #222">Show</div>
  <svg class="abs" style="left:184.5px;top:286.5px" width="11" height="5" viewBox="0 0 11 5"><path d="M0 0 H10.5 L5.25 4.5Z" fill="#777"/></svg>
  <div class="abs" style="left:18px;top:303px;width:187px;height:1px;background:#dcdcdc"></div>
  <div class="abs" style="left:18px;top:319px;width:187px;height:36px;border:1px solid #5d61ec;border-radius:3px"></div>
  <div class="abs" style="left:18px;top:327px;width:187px;text-align:center;font-size:15px;line-height:18px;color:#5d61ec;-webkit-text-stroke:0.3px #5d61ec">EDIT</div>
</div>
</body></html>
